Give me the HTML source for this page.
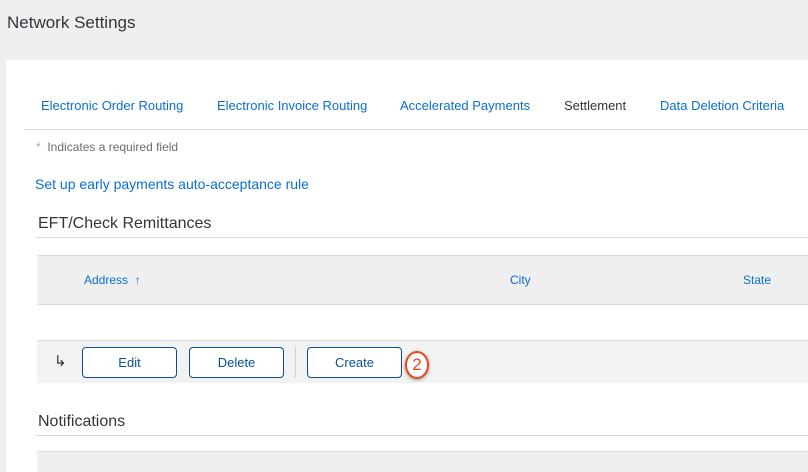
<!DOCTYPE html>
<html><head><style>
body{margin:0;width:808px;height:472px;overflow:hidden;background:#eeeff1;font-family:"Liberation Sans",sans-serif;position:relative}
.a{position:absolute;white-space:nowrap}
.l{color:#0a6ed1}
.btn{position:absolute;top:347px;border:1px solid #0b4f96;border-radius:4px;background:#fff;color:#0b4f96;font-size:13px;text-align:center;line-height:29px;box-sizing:border-box;height:31px}
</style></head><body>
<div class="a" style="left:7px;top:13px;font-size:17px;color:#32363a">Network Settings</div>
<div class="a" style="left:6px;top:60px;width:802px;height:412px;background:#fff"></div>
<div class="a l" style="left:41px;top:98px;font-size:13px">Electronic Order Routing</div>
<div class="a l" style="left:217px;top:98px;font-size:13px">Electronic Invoice Routing</div>
<div class="a l" style="left:400px;top:98px;font-size:13px">Accelerated Payments</div>
<div class="a" style="left:564px;top:98px;font-size:13px;color:#32363a">Settlement</div>
<div class="a l" style="left:660px;top:98px;font-size:13px">Data Deletion Criteria</div>
<div class="a" style="left:25px;top:129px;width:783px;height:1px;background:#d9d9d9"></div>
<div class="a" style="left:36px;top:140px;font-size:12px;color:#6a6d70"><span style="color:#a0a8c0">*</span>&nbsp; Indicates a required field</div>
<div class="a l" style="left:35px;top:176px;font-size:14px">Set up early payments auto-acceptance rule</div>
<div class="a" style="left:38px;top:215px;font-size:16px;color:#32363a">EFT/Check Remittances</div>
<div class="a" style="left:35px;top:237px;width:773px;height:1px;background:#d9d9d9"></div>
<div class="a" style="left:37px;top:255px;width:771px;height:50px;background:#efefef;border-top:1px solid #ddd;border-bottom:1px solid #ddd;box-sizing:border-box"></div>
<div class="a l" style="left:84px;top:273px;font-size:12px">Address &nbsp;<b>↑</b></div>
<div class="a l" style="left:510px;top:273px;font-size:12px">City</div>
<div class="a l" style="left:743px;top:273px;font-size:12px">State</div>
<div class="a" style="left:37px;top:340px;width:771px;height:43px;background:#f2f2f2;border-top:1px solid #ddd;box-sizing:border-box"></div>
<div class="a" style="left:54px;top:352px;font-size:15px;color:#32363a">↳</div>
<div class="btn" style="left:82px;width:95px">Edit</div>
<div class="btn" style="left:189px;width:95px">Delete</div>
<div class="a" style="left:295px;top:347px;width:1px;height:31px;background:#d0d0d0"></div>
<div class="btn" style="left:307px;width:95px">Create</div>
<div class="a" style="left:405px;top:351px;width:20px;height:24px;border:2px solid #e8491d;border-radius:50%;background:#fff;color:#e8491d;font-size:17px;text-align:center;line-height:24px;box-shadow:0 1px 3px rgba(0,0,0,.4)">2</div>
<div class="a" style="left:38px;top:413px;font-size:16px;color:#32363a">Notifications</div>
<div class="a" style="left:35px;top:435px;width:773px;height:1px;background:#d9d9d9"></div>
<div class="a" style="left:37px;top:451px;width:771px;height:21px;background:#efefef;border-top:1px solid #ddd;box-sizing:border-box"></div>
</body></html>
